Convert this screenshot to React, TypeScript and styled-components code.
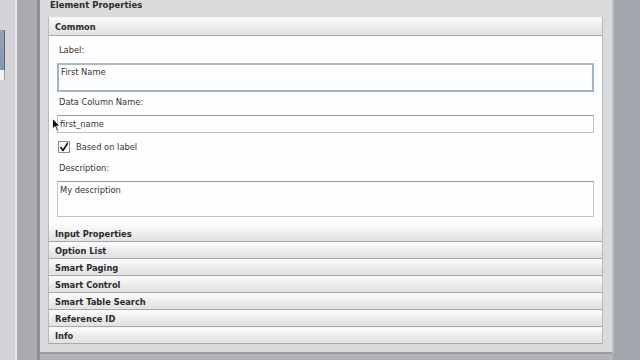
import React from "react";
import styled, { createGlobalStyle } from "styled-components";

const Global = createGlobalStyle`
  html, body { margin: 0; padding: 0; background: #a3a6ad; }
  body { font-family: "DejaVu Sans", Verdana, sans-serif; }
  * { box-sizing: border-box; }
`;

const Page = styled.div`
  display: flex;
  width: 640px;
  height: 360px;
  overflow: hidden;
  background: #a3a6ad;
`;

const LeftStrip = styled.div`
  width: 15px;
  background: #d3d4d7;
  padding-top: 30px;
  display: flex;
  flex-direction: column;
`;

const MiniPanel = styled.div`
  width: 5px;
  height: 40px;
  background: linear-gradient(#9c9db2, #7e9bb1);
  border-right: 1px solid #5f6470;
`;

const MiniWhite = styled.div`
  width: 5px;
  height: 10px;
  background: #f2f3f4;
  border-right: 1px solid #9a9ca2;
`;

const Highlight = styled.div`
  width: 2px;
  background: #e7e8ea;
`;

const Gutter = styled.div`
  width: 23px;
  background: #a9abaf;
  border-right: 3px solid #8e9094;
`;

const Column = styled.div`
  display: flex;
  flex-direction: column;
  background: #b3b4b8;
`;

const Panel = styled.div`
  width: 573px;
  height: 354px;
  background: #dadbdd;
  padding: 0 9px 0 8px;
  border-right: 1px solid #c4c5c8;
  border-bottom: 2px solid #9a9ca0;
  display: flex;
  flex-direction: column;
  box-shadow: 1px 0 0 #b9bbbf;
`;

const Title = styled.div`
  height: 17px;
  line-height: 11px;
  padding-left: 2px;
  font-size: 8.5px;
  font-weight: bold;
  color: #2c2c2c;
`;

const Section = styled.div`
  border-left: 1px solid #b8b9bb;
  border-right: 1px solid #b8b9bb;
  background: #fff;
  position: relative;
`;

const Header = styled.div<{ open?: boolean }>`
  height: ${(p) => (p.open ? 19 : 17)}px;
  padding-left: 6px;
  display: flex;
  align-items: center;
  font-size: 8.3px;
  font-weight: bold;
  color: #2a2a2a;
  background: linear-gradient(#fbfbfb, #e9e9ea 60%, #e2e2e4);
  border-bottom: 1px solid #a8a9ab;
  border-top: 1px solid #f6f6f6;
`;

const Body = styled.div`
  padding: 8px 8px 8px 8px;
  display: flex;
  flex-direction: column;
  background: #fefefe;
  position: relative;
`;

const FieldLabel = styled.div<{ gapAfter: number }>`
  height: 12px;
  line-height: 12px;
  font-size: 8.3px;
  color: #333;
  padding-left: 2px;
  margin-bottom: ${(p) => p.gapAfter}px;
`;

const Input = styled.div<{ h: number; focused?: boolean; gapAfter: number }>`
  height: ${(p) => p.h}px;
  margin-bottom: ${(p) => p.gapAfter}px;
  border: ${(p) => (p.focused ? "2px solid #9fb5c6" : "1px solid #c2c2c2")};
  border-top-color: ${(p) => (p.focused ? "#a9bccb" : "#9a9a9a")};
  box-shadow: ${(p) => (p.focused ? "inset 0 0 2px #dff0fb" : "none")};
  background: #fefefe;
  font-size: 8.3px;
  color: #333;
  padding: ${(p) => (p.focused ? "1px 2px" : "2px 2px")};
  line-height: 12px;
`;

const CheckRow = styled.div`
  display: flex;
  align-items: center;
  height: 12px;
  margin-bottom: 9px;
  padding-left: 1px;
  gap: 6px;
  font-size: 8.3px;
  color: #333;
`;

const Box = styled.div`
  width: 12px;
  height: 12px;
  border: 1px solid #8f8f8f;
  background: linear-gradient(#f4f4f4, #ffffff);
  display: flex;
  align-items: center;
  justify-content: center;
`;

const Cursor = styled.svg`
  position: absolute;
  left: 3px;
  top: 82px;
`;

const Rows = styled.div`
  display: flex;
  flex-direction: column;
`;

const rows = [
  "Input Properties",
  "Option List",
  "Smart Paging",
  "Smart Control",
  "Smart Table Search",
  "Reference ID",
  "Info",
];

export default function App() {
  return (
    <>
      <Global />
      <Page>
        <LeftStrip>
          <MiniPanel />
          <MiniWhite />
        </LeftStrip>
        <Highlight />
        <Gutter />
        <Column>
          <Panel>
            <Title>Element Properties</Title>
            <Section>
              <Header open>Common</Header>
              <Body>
                <FieldLabel gapAfter={7}>Label:</FieldLabel>
                <Input h={29} focused gapAfter={4}>First Name</Input>
                <FieldLabel gapAfter={7}>Data Column Name:</FieldLabel>
                <Input h={18} gapAfter={8}>first_name</Input>
                <CheckRow>
                  <Box>
                    <svg width="10" height="10" viewBox="0 0 10 10">
                      <path d="M1.5 5 L4 8.5 L8.8 0.8" stroke="#111" strokeWidth="1.6" fill="none" strokeLinejoin="round" />
                    </svg>
                  </Box>
                  Based on label
                </CheckRow>
                <FieldLabel gapAfter={7}>Description:</FieldLabel>
                <Input h={36} gapAfter={0}>My description</Input>
                <Cursor width="9" height="14" viewBox="0 0 9 14">
                  <path d="M0.5 0.5 L0.5 11 L3 8.5 L5 13 L6.5 12.3 L4.6 8 L8 8 Z" fill="#111" stroke="#fff" strokeWidth="0.8" />
                </Cursor>
              </Body>
              <Rows>
                {rows.map((r) => (
                  <Header key={r}>{r}</Header>
                ))}
              </Rows>
            </Section>
          </Panel>
        </Column>
      </Page>
    </>
  );
}
